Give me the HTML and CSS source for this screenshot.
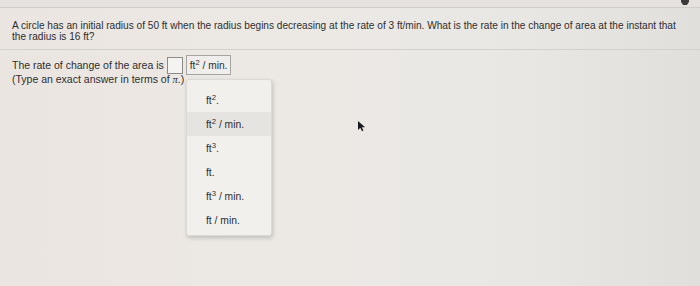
FILE: index.html
```html
<!DOCTYPE html>
<html>
<head>
<meta charset="utf-8">
<link rel="stylesheet" href="styles.css">
</head>
<body>
<div class="screen">
  <div class="topbar"><span class="corner-icon"></span></div>
  <div class="question">A circle has an initial radius of 50 ft when the radius begins decreasing at the rate of 3 ft/min. What is the rate in the change of area at the instant that the radius is 16 ft?</div>
  <div class="answer">
    <div class="answer-line">
      <span>The rate of change of the area is</span>
      <span class="input-box"></span>
      <span class="select-box">ft<sup>2</sup> / min.</span>
    </div>
    <div class="hint">(Type an exact answer in terms of <span class="pi">π</span>.)</div>
    <ul class="menu">
      <li>ft<sup>2</sup>.</li>
      <li class="active">ft<sup>2</sup> / min.</li>
      <li>ft<sup>3</sup>.</li>
      <li>ft.</li>
      <li>ft<sup>3</sup> / min.</li>
      <li>ft / min.</li>
    </ul>
    <svg class="cursor" width="9" height="12" viewBox="0 0 9 12"><path d="M1 1 L1 10 L3.3 7.8 L5 11.2 L6.4 10.5 L4.8 7.2 L8 7.2 Z" fill="#1a1a1a"/></svg>
  </div>
</div>
</body>
</html>
```
FILE: styles.css
```css
html, body {
  margin: 0;
  padding: 0;
}
body {
  width: 700px;
  height: 286px;
  overflow: hidden;
  font-family: "Liberation Sans", Arial, sans-serif;
  color: #2e2e2e;
  background: linear-gradient(90deg, #ebe5e1 0%, #ece9e5 45%, #e8e7e4 75%, #e0dfdc 100%);
}
.screen {
  position: relative;
  height: 286px;
}
.topbar {
  height: 7px;
  border-bottom: 1px solid #cfcdca;
  background: #e4e1de;
  position: relative;
}
.corner-icon {
  position: absolute;
  right: 11px;
  top: -3px;
  width: 8px;
  height: 8px;
  background: #3a3a3a;
  border-radius: 2px;
  clip-path: polygon(0 0, 100% 0, 100% 60%, 75% 100%, 25% 100%, 0 60%);
}
.question {
  font-size: 10.1px;
  line-height: 11px;
  padding: 12px 12px 0 12px;
  height: 29px;
  border-bottom: 1px solid #d2d0cd;
}
.answer {
  position: relative;
  padding: 5px 12px 0 12px;
  font-size: 10.5px;
}
.answer-line {
  display: flex;
  align-items: center;
  height: 20px;
}
.input-box {
  display: inline-block;
  width: 14px;
  height: 15px;
  border: 1px solid #8d8b88;
  background: #f4f3f1;
  margin-left: 3px;
}
.select-box {
  display: inline-block;
  margin-left: 3px;
  border: 1px solid #a7a5a2;
  padding: 3px 3px 2px 3px;
  height: 13px;
  line-height: 14px;
  background: #efeeec;
  font-size: 10.2px;
}
sup {
  font-size: 75%;
  line-height: 0;
  vertical-align: 4px;
}
.hint {
  margin-top: -2px;
  line-height: 12px;
}
.pi {
  font-family: "Liberation Serif", serif;
  font-style: italic;
}
.menu {
  position: absolute;
  left: 186px;
  top: 29px;
  width: 84px;
  margin: 0;
  padding: 8px 0 3px 0;
  list-style: none;
  background: #f1f0ed;
  border: 1px solid #dcdad7;
  border-radius: 3px;
  box-shadow: 1px 2px 4px rgba(0,0,0,0.18);
  font-size: 10.3px;
}
.menu li {
  height: 24px;
  line-height: 25px;
  padding-left: 19px;
}
.menu li.active {
  background: #e6e4e0;
}
.cursor {
  position: absolute;
  left: 357px;
  top: 70px;
}
```
